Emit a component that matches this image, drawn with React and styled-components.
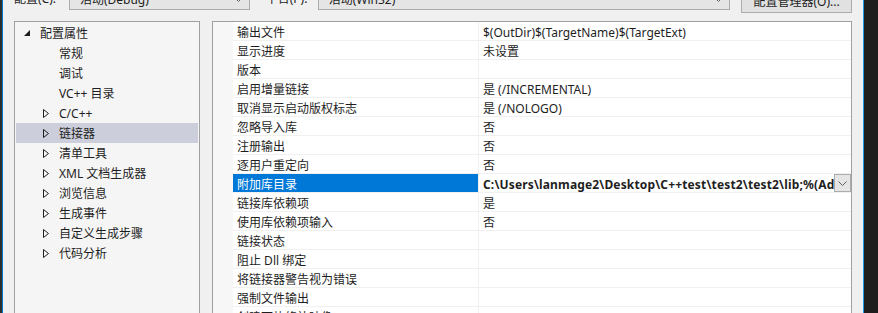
import React from 'react';
import styled, { createGlobalStyle } from 'styled-components';

const GlobalStyle = createGlobalStyle`
    html, body {
        margin: 0;
        padding: 0;
        background: #1e1e1e;
        overflow: hidden;
    }
    body {
        font-family: "Noto Sans", "Noto Sans CJK SC", sans-serif;
        font-size: 12px;
        color: #1e1e1e;
    }
`;

const Screen = styled.div`
    display: flex;
    width: 878px;
    height: 313px;
    overflow: hidden;
`;

const LeftEdge = styled.div`
    width: 2px;
    background: #2d2d30;
    border-right: 1px solid #007acc;
`;

const RightEdge = styled.div`
    flex: 1;
    background: #1e1e1e;
    border-left: 1px solid #1c97ea;
`;

const Dialog = styled.div`
    width: 860px;
    background: #f0f0f0;
    padding: 0 11px;
    box-sizing: border-box;
    display: flex;
    flex-direction: column;
`;

const TopBar = styled.div`
    display: flex;
    align-items: flex-start;
    margin-top: -12px;
    height: 25px;
`;

const Label = styled.span`
    width: ${(p) => p.w}px;
    line-height: 22px;
    white-space: nowrap;
`;

const Combo = styled.div`
    width: ${(p) => p.w}px;
    height: 22px;
    box-sizing: border-box;
    background: #e5e5e5;
    border: 1px solid #acacac;
    display: flex;
    align-items: center;
    justify-content: space-between;
    padding: 0 6px 0 10px;
    margin-right: ${(p) => p.mr}px;
`;

const Button = styled.div`
    width: 111px;
    height: 25px;
    box-sizing: border-box;
    background: #e1e1e1;
    border: 1px solid #adadad;
    display: flex;
    align-items: center;
    justify-content: center;
`;

const Body = styled.div`
    display: flex;
    gap: 12px;
    margin-top: 8px;
`;

const TreeBox = styled.div`
    width: 186px;
    height: 300px;
    box-sizing: border-box;
    background: #f5f5f5;
    border: 1px solid #a0a0a0;
    padding: 1px 1px 0;
`;

const TreeRow = styled.div`
    height: 20px;
    display: flex;
    align-items: center;
    padding-left: ${(p) => 8 + p.level * 19}px;
    background: ${(p) => (p.selected ? '#cccedb' : 'transparent')};
    white-space: nowrap;
`;

const ArrowSlot = styled.span`
    width: 16px;
    display: flex;
    align-items: center;
`;

const Grid = styled.div`
    width: 640px;
    height: 300px;
    box-sizing: border-box;
    background: #ffffff;
    border: 1px solid #a0a0a0;
    display: grid;
    grid-template-columns: 20px 246px 1fr;
    grid-auto-rows: 19px;
    align-content: start;
`;

const Gutter = styled.div`
    background: #f7f7f7;
`;

const NameCell = styled.div`
    border-bottom: 1px solid #f0f0f0;
    border-right: 1px solid #f0f0f0;
    padding: 2px 0 0 4px;
    display: flex;
    align-items: center;
    white-space: nowrap;
    background: ${(p) => (p.selected ? '#0078d7' : 'transparent')};
    color: ${(p) => (p.selected ? '#ffffff' : '#1e1e1e')};
`;

const ValueCell = styled.div`
    border-bottom: 1px solid #f0f0f0;
    padding: ${(p) => (p.bold ? '0 0 0 4px' : '2px 0 0 4px')};
    display: flex;
    align-items: center;
    white-space: nowrap;
    overflow: hidden;
    font-weight: ${(p) => (p.bold ? 700 : 400)};
    letter-spacing: ${(p) => (p.bold ? '0.15px' : '0')};
`;

const ValueText = styled.span`
    flex: 1;
    overflow: hidden;
    padding-top: ${(p) => (p.bold ? 2 : 0)}px;
`;

const DropButton = styled.div`
    width: 17px;
    height: 18px;
    box-sizing: border-box;
    background: #e5e5e5;
    border: 1px solid #acacac;
    display: flex;
    align-items: center;
    justify-content: center;
    flex-shrink: 0;
`;

const Expanded = () => (
    <svg width="6" height="6" viewBox="0 0 6 6">
        <path d="M6 0 L6 6 L0 6 Z" fill="#1e1e1e" />
    </svg>
);

const Collapsed = () => (
    <svg width="6" height="9" viewBox="0 0 6 9">
        <path d="M0.5 0.5 L5.5 4.5 L0.5 8.5 Z" fill="none" stroke="#1e1e1e" strokeWidth="1" />
    </svg>
);

const Chevron = ({ color = '#606060' }) => (
    <svg width="9" height="5" viewBox="0 0 9 5">
        <path d="M0.5 0.5 L4.5 4.5 L8.5 0.5" fill="none" stroke={color} strokeWidth="1" />
    </svg>
);

const tree = [
    { label: '配置属性', level: 0, arrow: 'open' },
    { label: '常规', level: 1 },
    { label: '调试', level: 1 },
    { label: 'VC++ 目录', level: 1 },
    { label: 'C/C++', level: 1, arrow: 'closed' },
    { label: '链接器', level: 1, arrow: 'closed', selected: true },
    { label: '清单工具', level: 1, arrow: 'closed' },
    { label: 'XML 文档生成器', level: 1, arrow: 'closed' },
    { label: '浏览信息', level: 1, arrow: 'closed' },
    { label: '生成事件', level: 1, arrow: 'closed' },
    { label: '自定义生成步骤', level: 1, arrow: 'closed' },
    { label: '代码分析', level: 1, arrow: 'closed' },
];

const props = [
    ['输出文件', '$(OutDir)$(TargetName)$(TargetExt)'],
    ['显示进度', '未设置'],
    ['版本', ''],
    ['启用增量链接', '是 (/INCREMENTAL)'],
    ['取消显示启动版权标志', '是 (/NOLOGO)'],
    ['忽略导入库', '否'],
    ['注册输出', '否'],
    ['逐用户重定向', '否'],
    ['附加库目录', 'C:\\Users\\lanmage2\\Desktop\\C++test\\test2\\test2\\lib;%(AdditionalLibraryDirectories)', true],
    ['链接库依赖项', '是'],
    ['使用库依赖项输入', '否'],
    ['链接状态', ''],
    ['阻止 Dll 绑定', ''],
    ['将链接器警告视为错误', ''],
    ['强制文件输出', ''],
    ['创建可热修补映像', ''],
];

export default function App() {
    return (
        <Screen>
            <GlobalStyle />
            <LeftEdge />
            <Dialog>
                <TopBar>
                    <Label w={55}>配置(C):</Label>
                    <Combo w={181} mr={16}>
                        <span>活动(Debug)</span>
                        <Chevron />
                    </Combo>
                    <Label w={52}>平台(P):</Label>
                    <Combo w={413} mr={11}>
                        <span>活动(Win32)</span>
                        <Chevron />
                    </Combo>
                    <Button>配置管理器(O)...</Button>
                </TopBar>
                <Body>
                    <TreeBox>
                        {tree.map((t) => (
                            <TreeRow key={t.label} level={t.level} selected={t.selected}>
                                <ArrowSlot>
                                    {t.arrow === 'open' && <Expanded />}
                                    {t.arrow === 'closed' && <Collapsed />}
                                </ArrowSlot>
                                {t.label}
                            </TreeRow>
                        ))}
                    </TreeBox>
                    <Grid>
                        {props.map(([name, value, selected]) => (
                            <React.Fragment key={name}>
                                <Gutter />
                                <NameCell selected={selected}>{name}</NameCell>
                                <ValueCell bold={selected}>
                                    <ValueText bold={selected}>{value}</ValueText>
                                    {selected && (
                                        <DropButton>
                                            <Chevron />
                                        </DropButton>
                                    )}
                                </ValueCell>
                            </React.Fragment>
                        ))}
                    </Grid>
                </Body>
            </Dialog>
            <RightEdge />
        </Screen>
    );
}
